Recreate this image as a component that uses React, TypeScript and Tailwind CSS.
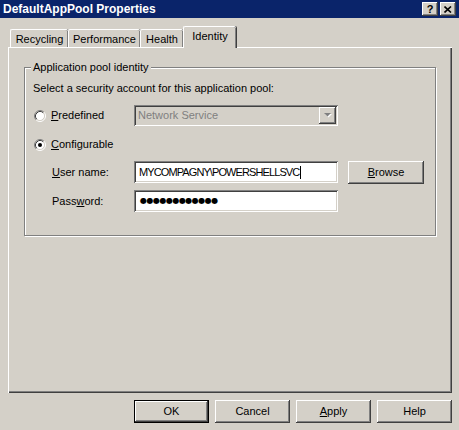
import React from "react";

const raised =
  "shadow-[inset_-1px_-1px_0_#404040,inset_1px_1px_0_#ffffff,inset_-2px_-2px_0_#808080,inset_2px_2px_0_#d4d0c8]";
const sunken =
  "shadow-[inset_1px_1px_0_#808080,inset_-1px_-1px_0_#ffffff,inset_2px_2px_0_#404040,inset_-2px_-2px_0_#d4d0c8]";

const Radio = ({ checked }: { checked?: boolean }) => (
  <svg width="12" height="12" viewBox="0 0 12 12" className="shrink-0">
    <circle cx="6" cy="6" r="4.5" fill="#ffffff" />
    <path d="M2.11 9.89 A5.5 5.5 0 0 1 9.89 2.11" stroke="#808080" fill="none" />
    <path d="M9.89 2.11 A5.5 5.5 0 0 1 2.11 9.89" stroke="#ffffff" fill="none" />
    <path d="M2.82 9.18 A4.5 4.5 0 0 1 9.18 2.82" stroke="#404040" fill="none" />
    <path d="M9.18 2.82 A4.5 4.5 0 0 1 2.82 9.18" stroke="#d4d0c8" fill="none" />
    {checked && <circle cx="6" cy="6" r="2" fill="#000000" />}
  </svg>
);

const Key = ({ children }: { children: React.ReactNode }) => (
  <span className="underline underline-offset-[1px]">{children}</span>
);

const Button = ({
  children,
  isDefault,
  className = "",
}: {
  children: React.ReactNode;
  isDefault?: boolean;
  className?: string;
}) => (
  <div
    className={`w-[75px] h-[23px] flex items-center justify-center bg-[#d4d0c8] ${
      isDefault ? "border border-black" : ""
    } ${className}`}
  >
    <div className={`w-full h-full flex items-center justify-center ${raised}`}>
      {children}
    </div>
  </div>
);

const tabs = [
  { label: "Recycling", w: "w-[58px]" },
  { label: "Performance", w: "w-[72px]" },
  { label: "Health", w: "w-[43px]" },
];

export default function App() {
  return (
    <div className="w-[459px] h-[430px] bg-[#d4d0c8] flex flex-col font-['Liberation_Sans',Arial,sans-serif] text-[11px] text-black leading-[13px] overflow-hidden">
      {/* title bar */}
      <div className="h-[18px] bg-[#0a246a] flex items-center pl-[3px] pr-[3px]">
        <span className="text-white font-bold text-[12px]">DefaultAppPool Properties</span>
        <div className="ml-auto flex gap-[2px]">
          <div className={`w-[16px] h-[14px] bg-[#d4d0c8] flex items-center justify-center font-bold text-[11px] ${raised}`}>
            ?
          </div>
          <div className={`w-[16px] h-[14px] bg-[#d4d0c8] flex items-center justify-center ${raised}`}>
            <svg width="8" height="7" viewBox="0 0 8 7">
              <path d="M0.5 0.5 L7 6.5 M7 0.5 L0.5 6.5" stroke="#000" strokeWidth="1.6" />
            </svg>
          </div>
        </div>
      </div>

      <div className="flex flex-col pl-[8px] pr-[7px] pt-[8px]">
        {/* tabs */}
        <div className="flex items-end h-[21px] pl-[2px] relative z-10">
          {tabs.map((t) => (
            <div
              key={t.label}
              className={`${t.w} h-[18px] flex items-center justify-center pt-[1px] border-t border-l border-white rounded-tl-[2px] rounded-tr-[2px] shadow-[inset_-1px_0_0_#808080,1px_0_0_#404040]`}
            >
              {t.label}
            </div>
          ))}
          <div className="w-[53px] h-[22px] mb-[-1px] bg-[#d4d0c8] flex items-start justify-center pt-[3px] border-t border-l border-white rounded-tl-[2px] rounded-tr-[2px] shadow-[inset_-1px_0_0_#808080,1px_0_0_#404040]">
            Identity
          </div>
        </div>

        {/* panel */}
        <div
          className={`h-[346px] w-[444px] flex flex-col pl-[16px] pt-[20px] shadow-[inset_1px_1px_0_#ffffff,inset_-1px_-1px_0_#404040,inset_-2px_-2px_0_#808080]`}
        >
          <div className="relative w-[412px] h-[169px] border border-[#808080] shadow-[inset_1px_1px_0_#ffffff,1px_1px_0_#ffffff] flex flex-col pl-[8px] pt-[14px]">
            <span className="absolute -top-[7px] left-[6px] px-[2px] bg-[#d4d0c8]">
              Application pool identity
            </span>
            <div>Select a security account for this application pool:</div>

            <div className="flex items-center h-[21px] mt-[10px]">
              <div className="w-[101px] flex items-center gap-[5px] pl-[1px]">
                <Radio />
                <span>
                  <Key>P</Key>redefined
                </span>
              </div>
              <div className={`w-[204px] h-[21px] bg-[#d4d0c8] flex items-center pl-[4px] pr-[2px] ${sunken}`}>
                <span className="text-[#808080]">Network Service</span>
                <div className={`ml-auto w-[17px] h-[17px] flex items-center justify-center ${raised}`}>
                  <svg width="8" height="5" viewBox="0 0 8 5">
                    <path d="M1 1 H8 L4.5 4.5 Z" fill="#ffffff" />
                    <path d="M0 0 H7 L3.5 3.5 Z" fill="#808080" />
                  </svg>
                </div>
              </div>
            </div>

            <div className="flex items-center gap-[5px] h-[13px] mt-[12px] pl-[1px]">
              <Radio checked />
              <span>
                <Key>C</Key>onfigurable
              </span>
            </div>

            <div className="flex items-center h-[22px] mt-[10px]">
              <span className="w-[101px] pl-[19px]">
                <Key>U</Key>ser name:
              </span>
              <div className={`w-[204px] h-[22px] bg-white flex items-center pl-[5px] ${sunken}`}>
                <span className="tracking-[-0.9px]">MYCOMPAGNY\POWERSHELLSVC</span>
                <span className="w-px h-[13px] bg-black ml-[1px]" />
              </div>
              <Button className="ml-[10px] w-[76px]">
                <span>
                  <Key>B</Key>rowse
                </span>
              </Button>
            </div>

            <div className="flex items-center h-[22px] mt-[7px]">
              <span className="w-[101px] pl-[19px]">
                Pass<Key>w</Key>ord:
              </span>
              <div className={`w-[204px] h-[22px] bg-white flex items-center pl-[6px] ${sunken}`}>
                <span className="font-['DejaVu_Sans',sans-serif] text-[8px] leading-[10px] tracking-[-0.5px]">
                  ●●●●●●●●●●●●
                </span>
              </div>
            </div>
          </div>
        </div>

        {/* bottom buttons */}
        <div className="flex justify-end gap-[6px] mt-[7px]">
          <Button isDefault>OK</Button>
          <Button>Cancel</Button>
          <Button>
            <span>
              <Key>A</Key>pply
            </span>
          </Button>
          <Button>Help</Button>
        </div>
      </div>
    </div>
  );
}
